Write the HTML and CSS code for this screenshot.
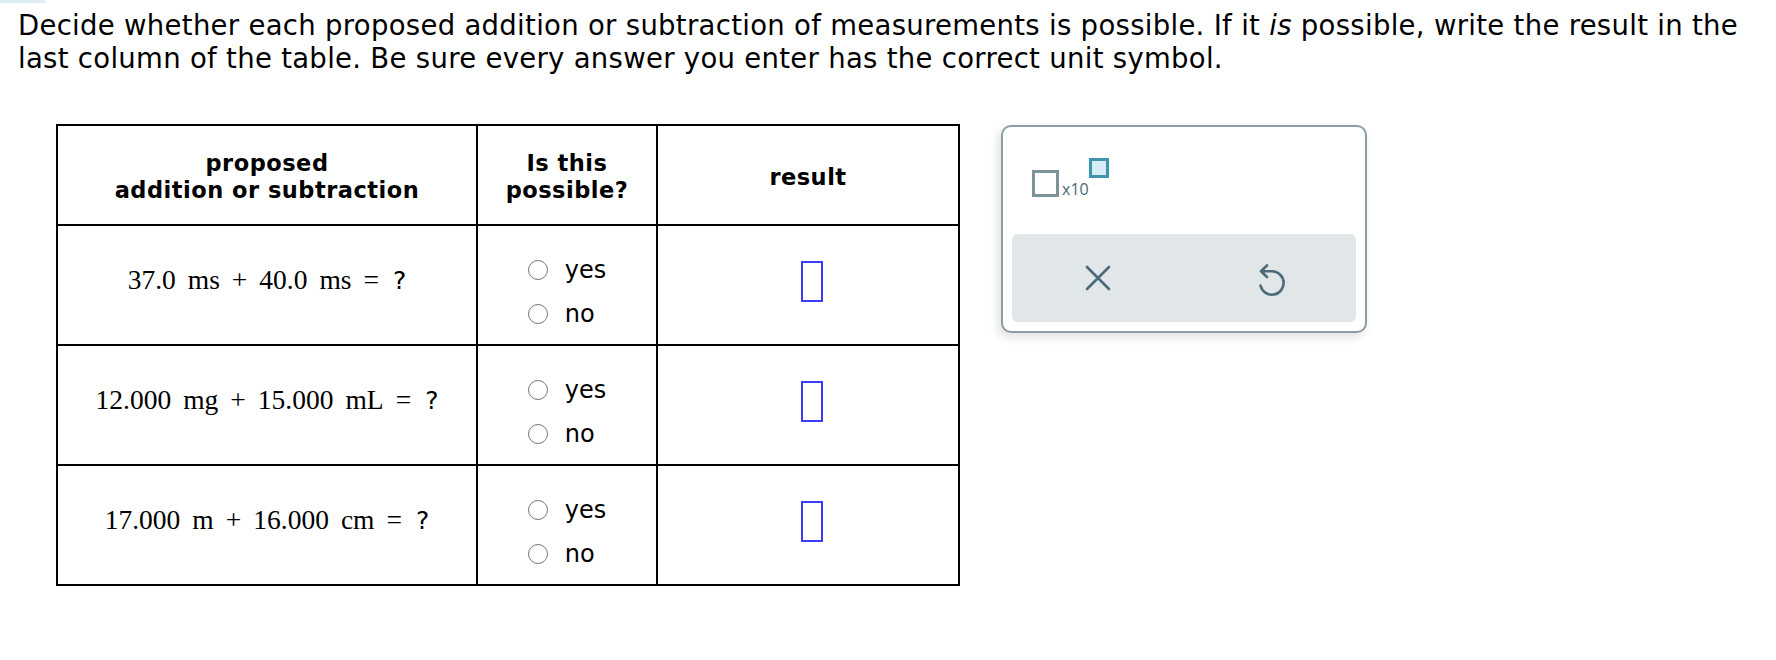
FILE: index.html
```html
<!DOCTYPE html>
<html lang="en">
<head>
<meta charset="utf-8">
<title>Measurements</title>
<link rel="stylesheet" href="styles.css">
</head>
<body>
<div class="focus-bar"></div>
<p class="prompt">Decide whether each proposed addition or subtraction of measurements is possible. If it <i>is</i> possible, write the result in the last column of the table. Be sure every answer you enter has the correct unit symbol.</p>
<div class="work">
  <table class="grid">
    <thead>
      <tr class="head-row">
        <th class="c1">proposed<br>addition or subtraction</th>
        <th class="c2">Is this<br>possible?</th>
        <th class="c3">result</th>
      </tr>
    </thead>
    <tbody>
      <tr class="body-row">
        <td class="c1"><span class="expr"><span class="num">37.0</span><span class="unit">ms</span><span class="op">+</span><span class="num">40.0</span><span class="unit">ms</span><span class="op">=</span><span class="q">?</span></span></td>
        <td class="c2">
          <div class="choices">
            <label class="choice"><span class="radio"></span><span>yes</span></label>
            <label class="choice"><span class="radio"></span><span>no</span></label>
          </div>
        </td>
        <td class="c3"><span class="answer"></span></td>
      </tr>
      <tr class="body-row">
        <td class="c1"><span class="expr"><span class="num">12.000</span><span class="unit">mg</span><span class="op">+</span><span class="num">15.000</span><span class="unit">mL</span><span class="op">=</span><span class="q">?</span></span></td>
        <td class="c2">
          <div class="choices">
            <label class="choice"><span class="radio"></span><span>yes</span></label>
            <label class="choice"><span class="radio"></span><span>no</span></label>
          </div>
        </td>
        <td class="c3"><span class="answer"></span></td>
      </tr>
      <tr class="body-row">
        <td class="c1"><span class="expr"><span class="num">17.000</span><span class="unit">m</span><span class="op">+</span><span class="num">16.000</span><span class="unit">cm</span><span class="op">=</span><span class="q">?</span></span></td>
        <td class="c2">
          <div class="choices">
            <label class="choice"><span class="radio"></span><span>yes</span></label>
            <label class="choice"><span class="radio"></span><span>no</span></label>
          </div>
        </td>
        <td class="c3"><span class="answer"></span></td>
      </tr>
    </tbody>
  </table>

  <div class="panel">
    <div class="tools">
      <span class="sci" aria-label="scientific notation">
        <span class="sci-base"></span>
        <span class="sci-text">x10</span>
        <span class="sci-exp"></span>
      </span>
    </div>
    <div class="actions">
      <button class="action" aria-label="clear">
        <svg width="26" height="26" viewBox="0 0 26 26"><path d="M2 2 L24 24 M24 2 L2 24" fill="none" stroke="#4b6a77" stroke-width="2.6" stroke-linecap="round"/></svg>
      </button>
      <button class="action" aria-label="undo">
        <svg width="40" height="40" viewBox="0 0 40 40"><path d="M17 7.5 L11 13.3 L17 19 M11 13.3 H22 A11.7 11.7 0 1 1 10.5 27.5" fill="none" stroke="#4b6a77" stroke-width="2.6" stroke-linecap="round" stroke-linejoin="round"/></svg>
      </button>
    </div>
  </div>
</div>
</body>
</html>
```

FILE: styles.css
```css
html, body {
  margin: 0;
  padding: 0;
  background: #ffffff;
}

body {
  font-family: "DejaVu Sans", Verdana, sans-serif;
  color: #000000;
}

.focus-bar {
  width: 45px;
  height: 3px;
  background: #dcedf6;
}

.prompt {
  margin: 6px 20px 0 18px;
  font-size: 27.5px;
  line-height: 33px;
  letter-spacing: 0.3px;
}

.work {
  display: flex;
  align-items: flex-start;
  gap: 41px;
  margin: 49px 0 0 56px;
}

.grid {
  border-collapse: separate;
  border-spacing: 0;
  table-layout: fixed;
  border-left: 2px solid #000;
  border-top: 2px solid #000;
}

.grid th,
.grid td {
  border-right: 2px solid #000;
  border-bottom: 2px solid #000;
  padding: 0;
  text-align: center;
  vertical-align: middle;
  box-sizing: border-box;
}

.grid .c1 { width: 420px; }
.grid .c2 { width: 180px; }
.grid .c3 { width: 302px; }

.head-row th {
  height: 100px;
  padding-top: 4px;
  font-size: 22.5px;
  line-height: 27px;
  letter-spacing: 0.5px;
  font-weight: bold;
}

.body-row td {
  height: 120px;
}

.body-row td.c1 {
  padding-bottom: 10px;
}

.body-row td.c3 {
  padding-bottom: 7px;
}

.expr {
  font-family: "Liberation Serif", "Times New Roman", serif;
  font-size: 27.5px;
  white-space: nowrap;
}

.num + .unit { margin-left: 12px; }
.op { margin: 0 12px; }
.q {
  font-family: "DejaVu Sans", Verdana, sans-serif;
  font-size: 25px;
  margin-left: 2px;
}

.choices {
  display: inline-flex;
  flex-direction: column;
  align-items: flex-start;
  gap: 12px;
  padding-top: 14px;
  font-size: 24px;
  line-height: 32px;
}

.choice {
  display: flex;
  align-items: center;
  gap: 17px;
}

.radio {
  width: 20px;
  height: 20px;
  box-sizing: border-box;
  border: 1.5px solid #767676;
  border-radius: 50%;
  background: #fff;
}

.answer {
  display: block;
  width: 22px;
  height: 41px;
  box-sizing: border-box;
  border: 2px solid #3c3cf2;
  margin-left: 143px;
}

.panel {
  width: 366px;
  height: 208px;
  box-sizing: border-box;
  margin-top: 1px;
  border: 2px solid #8b9ea7;
  border-radius: 10px;
  background: #fff;
  box-shadow: -3px 4px 10px rgba(0, 0, 0, 0.12);
  padding: 31px 9px 9px 9px;
  display: flex;
  flex-direction: column;
}

.tools {
  display: flex;
  padding-left: 20px;
  height: 39px;
}

.sci {
  display: flex;
  align-items: flex-end;
}

.sci-base {
  width: 27px;
  height: 27px;
  box-sizing: border-box;
  border: 3px solid #7d929b;
}

.sci-text {
  font-family: "Open Sans", sans-serif;
  font-size: 16px;
  line-height: 16px;
  color: #4c6772;
  margin-left: 3px;
}

.sci-exp {
  align-self: flex-start;
  width: 20px;
  height: 20px;
  box-sizing: border-box;
  border: 3px solid #3d96af;
  background: #d6edf3;
}

.actions {
  margin-top: auto;
  height: 88px;
  background: #e1e6e8;
  border-radius: 6px;
  display: flex;
}

.action {
  flex: 1;
  border: 0;
  background: transparent;
  padding: 0;
  display: flex;
  align-items: center;
  justify-content: center;
}
```
